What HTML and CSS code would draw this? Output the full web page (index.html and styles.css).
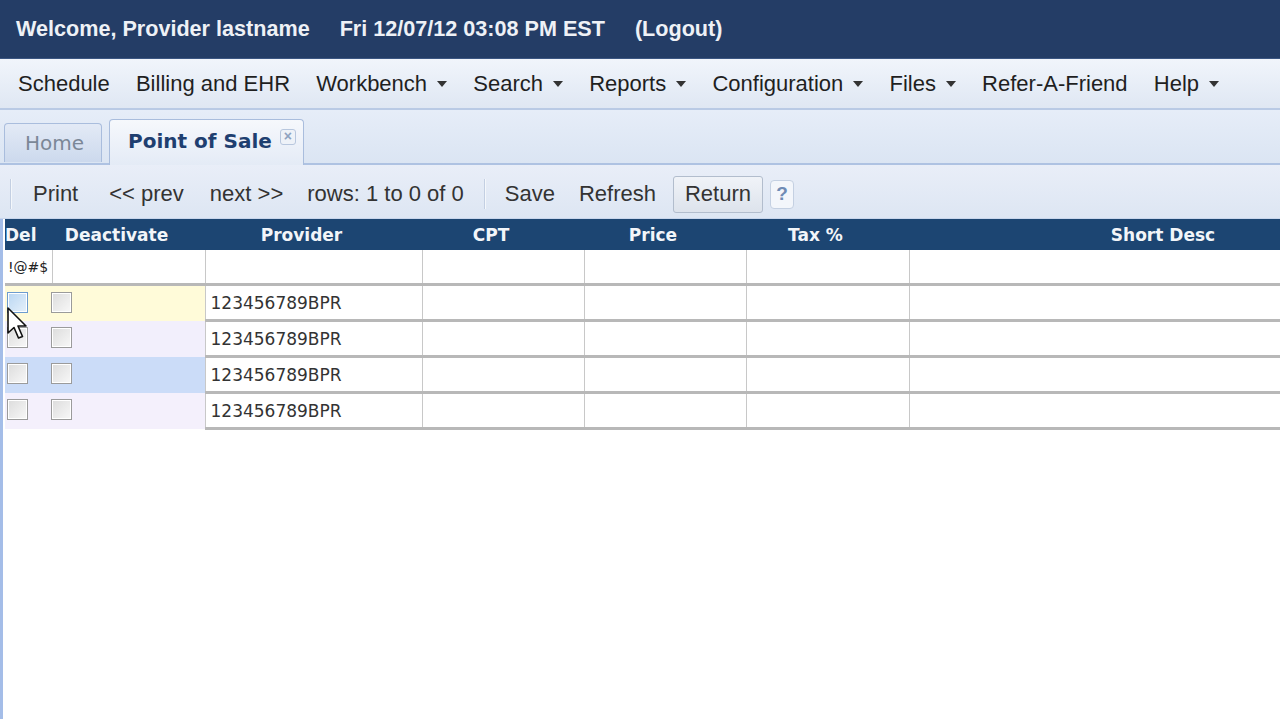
FILE: index.html
```html
<!DOCTYPE html>
<html>
<head>
    <title>Point of Sale</title>
    <link rel="stylesheet" href="styles.css">
</head>
<body>
    <div class="topbar">
        <span>Welcome, Provider lastname</span>
        <span>Fri 12/07/12 03:08 PM EST</span>
        <span>(Logout)</span>
    </div>

    <div class="menubar">
        <span class="menu-item">Schedule</span>
        <span class="menu-item">Billing and EHR</span>
        <span class="menu-item">Workbench <i class="caret"></i></span>
        <span class="menu-item">Search <i class="caret"></i></span>
        <span class="menu-item">Reports <i class="caret"></i></span>
        <span class="menu-item">Configuration <i class="caret"></i></span>
        <span class="menu-item">Files <i class="caret"></i></span>
        <span class="menu-item">Refer-A-Friend</span>
        <span class="menu-item">Help <i class="caret"></i></span>
    </div>

    <div class="tabstrip">
        <div class="tab">Home</div>
        <div class="tab tab-active">Point of Sale <span class="tab-close">&#215;</span></div>
    </div>

    <div class="toolbar">
        <span class="sep"></span>
        <span class="tool t-print">Print</span>
        <span class="tool t-prev">&lt;&lt; prev</span>
        <span class="tool">next &gt;&gt;</span>
        <span class="tool t-rows">rows: 1 to 0 of 0</span>
        <span class="sep"></span>
        <span class="tool t-save">Save</span>
        <span class="tool t-refresh">Refresh</span>
        <span class="tool btn">Return</span>
        <span class="help-btn">?</span>
    </div>

    <div class="content">
        <table class="grid">
            <colgroup>
                <col class="c-del">
                <col class="c-deact">
                <col class="c-prov">
                <col class="c-cpt">
                <col class="c-price">
                <col class="c-tax">
                <col class="c-desc">
            </colgroup>
            <thead>
                <tr>
                    <th class="th-del">Del</th>
                    <th>Deactivate</th>
                    <th>Provider</th>
                    <th>CPT</th>
                    <th>Price</th>
                    <th>Tax %</th>
                    <th>Short Desc</th>
                </tr>
            </thead>
            <tbody>
                <tr class="filter">
                    <td class="sym">!@#$</td>
                    <td></td><td></td><td></td><td></td><td></td><td></td>
                </tr>
                <tr class="row-yellow">
                    <td class="chk"><span class="box box-hover"></span></td>
                    <td class="chk"><span class="box"></span></td>
                    <td class="cell">123456789BPR</td>
                    <td class="cell"></td><td class="cell"></td><td class="cell"></td><td class="cell"></td>
                </tr>
                <tr class="row-lav">
                    <td class="chk"><span class="box"></span></td>
                    <td class="chk"><span class="box"></span></td>
                    <td class="cell">123456789BPR</td>
                    <td class="cell"></td><td class="cell"></td><td class="cell"></td><td class="cell"></td>
                </tr>
                <tr class="row-blue">
                    <td class="chk"><span class="box"></span></td>
                    <td class="chk"><span class="box"></span></td>
                    <td class="cell">123456789BPR</td>
                    <td class="cell"></td><td class="cell"></td><td class="cell"></td><td class="cell"></td>
                </tr>
                <tr class="row-lav2">
                    <td class="chk"><span class="box"></span></td>
                    <td class="chk"><span class="box"></span></td>
                    <td class="cell">123456789BPR</td>
                    <td class="cell"></td><td class="cell"></td><td class="cell"></td><td class="cell"></td>
                </tr>
            </tbody>
        </table>

        <!-- mouse pointer over the first checkbox -->
        <svg class="cursor" width="22" height="34" viewBox="0 0 22 34">
            <path d="M1 1 L1 26 L7 20.5 L11.5 31 L15.5 29.5 L11 19 L19 19 Z" fill="#fff" stroke="#111" stroke-width="1.6" stroke-linejoin="round"/>
        </svg>
    </div>
</body>
</html>
```

FILE: styles.css
```css
body { margin: 0; font-family: "Liberation Sans", Arial, sans-serif; background: #fff; overflow: hidden; }

.topbar { height: 58px; background: #243d66; color: #eef1f6; font-weight: bold; font-size: 21.6px; display: flex; align-items: center; gap: 30px; padding-left: 16px; border-bottom: 1px solid #3b5682; }

.menubar { height: 49px; background: linear-gradient(#f1f5fb, #dfe7f3); border-bottom: 2px solid #b9cae5; display: flex; align-items: center; gap: 26.2px; padding-left: 18px; font-size: 22px; color: #1f1f1f; }
.menu-item { display: flex; align-items: center; }
.caret { display: inline-block; width: 0; height: 0; margin-left: 10px; border-left: 5px solid transparent; border-right: 5px solid transparent; border-top: 6px solid #333; }

.tabstrip { height: 53px; background: linear-gradient(#e6edf8, #dbe5f3); border-bottom: 2px solid #aec2e2; display: flex; align-items: flex-end; gap: 7px; padding-left: 4px; font-family: "DejaVu Sans", Verdana, sans-serif; font-size: 20px; }
.tab { height: 38px; padding: 0 17px 0 20px; display: flex; align-items: center; border: 1px solid #a9bddd; border-bottom: none; border-radius: 4px 4px 0 0; background: linear-gradient(#e3eaf6, #ccd9ed); color: #7b8797; margin-bottom: 1px; }
.tab-active { height: 46px; margin-bottom: -2px; padding: 0 7px 0 18px; background: linear-gradient(#f6f8fc, #e4ebf6); color: #1f3f70; font-weight: bold; align-items: flex-start; padding-top: 9px; box-sizing: border-box; }
.tab-close { display: inline-block; width: 14px; height: 14px; margin-left: 8px; border: 1px solid #b8c7de; border-radius: 3px; background: #eef2f8; color: #8ea2c0; font-size: 14px; line-height: 13px; text-align: center; font-family: "Liberation Sans", Arial, sans-serif; }

.toolbar { height: 54px; box-sizing: border-box; padding-top: 5px; background: linear-gradient(#e9eef8, #dde6f3); border-bottom: 1px solid #c8d6ec; display: flex; align-items: center; padding-left: 10px; font-size: 22px; color: #333; }
.sep { width: 1px; height: 30px; background: #c3cfe2; border-right: 1px solid #f4f7fb; }
.tool { margin-left: 26px; }
.toolbar .t-print { margin-left: 21px; }
.toolbar .t-prev { margin-left: 31px; }
.toolbar .t-rows { margin-left: 24px; }
.tool + .sep { margin-left: 20px; }
.toolbar .t-save { margin-left: 19px; }
.toolbar .t-refresh { margin-left: 24px; }
.toolbar .btn { margin-left: 17px; height: 35px; padding: 0 11px; display: flex; align-items: center; border: 1px solid #b2bdcd; border-radius: 3px; background: linear-gradient(#f0f3f8, #dde3ec); }
.help-btn { margin-left: 7px; width: 22px; height: 27px; border: 1px solid #c4d0e2; border-radius: 4px; background: #f3f6fb; color: #6f8bb5; font-weight: bold; font-size: 19px; display: flex; align-items: center; justify-content: center; }

.content { position: relative; height: 500px; border-left: 3px solid #a4bde8; overflow: hidden; }

.grid { border-collapse: collapse; table-layout: fixed; width: 1436px; margin-left: 2px; font-family: "DejaVu Sans", Verdana, sans-serif; }
.c-del { width: 47px; }
.c-deact { width: 153px; }
.c-prov { width: 217px; }
.c-cpt { width: 162px; }
.c-price { width: 162px; }
.c-tax { width: 163px; }
.c-desc { width: 532px; }

.grid th { height: 31px; padding: 0 24px 0 0; background: #1c4572; color: #f2f5f9; font-size: 17px; font-weight: bold; text-align: center; white-space: nowrap; }
.grid th.th-del { text-align: left; padding: 0; }

.grid td { padding: 0; }
.filter td { height: 33px; background: #fff; border-left: 1px solid #c8c8c8; border-bottom: 3px solid #b8b8b8; }
.filter td.sym { border-left: none; font-size: 14px; padding-left: 3px; color: #222; }

.chk { height: 33px; vertical-align: middle; }
.cell { height: 33px; background: #fff; border-left: 1px solid #c8c8c8; border-bottom: 3px solid #b8b8b8; font-size: 17px; color: #333; }
.grid td.cell { padding-left: 5px; }

.row-yellow .chk { background: #fffbd9; }
.row-lav .chk { background: #f2effc; }
.row-blue .chk { background: #cbdcf8; }
.row-lav2 .chk { background: #f4f0fc; }

.box { display: block; width: 19px; height: 19px; margin-left: 2px; margin-top: -2px; border: 1px solid #9b9b9b; box-shadow: inset 0 0 0 1px #fff; background: linear-gradient(135deg, #dcdcdc, #f8f8f8); }
.chk + .chk .box { margin-left: -1px; }
.box-hover { border-color: #6d9ccf; background: linear-gradient(135deg, #b9d6f2, #e6f1fb); }

.cursor { position: absolute; left: 4px; top: 88px; }
```
